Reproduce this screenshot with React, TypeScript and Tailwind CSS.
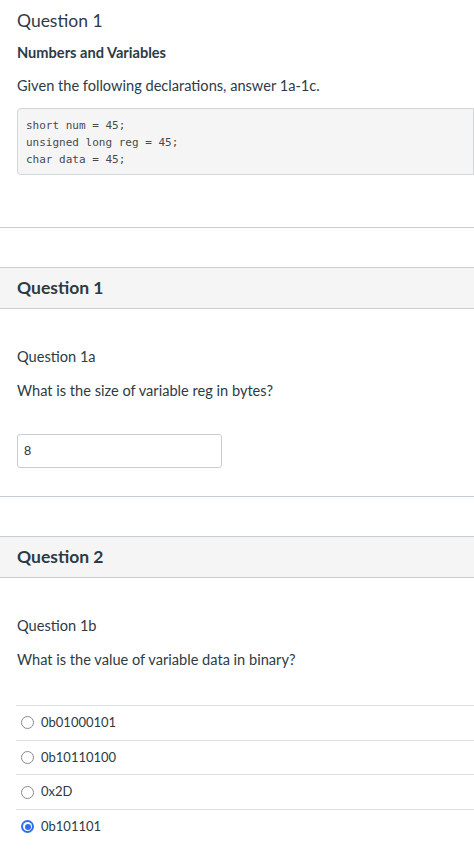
import React from "react";

const lato = { fontFamily: "Lato, 'Noto Sans', sans-serif" };

function Divider() {
  return <div className="h-px w-full bg-[#c7cdd1]" />;
}

function Header({ title }: { title: string }) {
  return (
    <div className="h-[42px] w-full border-y border-[#c7cdd1] bg-[#f5f5f5] flex items-center px-[17px]">
      <span className="text-[17.5px] font-bold text-[#2d3b45] leading-none">{title}</span>
    </div>
  );
}

function Radio({ checked }: { checked?: boolean }) {
  if (checked) {
    return (
      <span className="w-[13px] h-[13px] rounded-full bg-[#2f6fed] flex items-center justify-center shrink-0">
        <span className="w-[9px] h-[9px] rounded-full bg-white flex items-center justify-center">
          <span className="w-[6px] h-[6px] rounded-full bg-[#2f6fed]" />
        </span>
      </span>
    );
  }
  return <span className="w-[13px] h-[13px] rounded-full border border-[#8a8a8a] bg-white shrink-0" />;
}

export default function App() {
  const options = [
    { label: "0b01000101" },
    { label: "0b10110100" },
    { label: "0x2D" },
    { label: "0b101101", checked: true },
  ];
  return (
    <div className="w-[474px] h-[859px] bg-white text-[#2d3b45] overflow-hidden" style={lato}>
      <div className="pl-[17px]">
        <div className="h-[41px] leading-[41px] text-[17.5px]">Question 1</div>
        <div className="h-[24px] leading-[24px] text-[14.6px] font-bold">Numbers and Variables</div>
        <div className="h-[42px] leading-[42px] text-[14.6px]">Given the following declarations, answer 1a-1c.</div>
        <div className="mt-px h-[67px] box-border border border-[#d3d6d9] rounded-l-[4px] bg-[#f5f5f5] pl-[8px] pt-[8px]">
          <pre
            className="m-0 text-[11px] leading-[17px] text-[#444b50]"
            style={{ fontFamily: "'DejaVu Sans Mono', monospace" }}
          >
{`short num = 45;
unsigned long reg = 45;
char data = 45;`}
          </pre>
        </div>
      </div>
      <div className="h-[52px]" />
      <Divider />
      <div className="h-[39px]" />
      <Header title="Question 1" />
      <div className="pl-[17px]">
        <div className="h-[31px]" />
        <div className="h-[34px] leading-[34px] text-[14.6px]">Question 1a</div>
        <div className="h-[34px] leading-[34px] text-[14.6px]">What is the size of variable reg in bytes?</div>
        <div className="h-[26px]" />
        <div
          className="w-[205px] h-[34px] box-border border border-[#c7cdd1] rounded-[3px] flex items-center pl-[6px] text-[13px] text-[#333]"
          style={{ fontFamily: "'Liberation Sans', Arial, sans-serif" }}
        >
          8
        </div>
      </div>
      <div className="h-[28px]" />
      <Divider />
      <div className="h-[39px]" />
      <Header title="Question 2" />
      <div className="pl-[17px]">
        <div className="h-[31px]" />
        <div className="h-[34px] leading-[34px] text-[14.6px]">Question 1b</div>
        <div className="h-[34px] leading-[34px] text-[14.6px]">What is the value of variable data in binary?</div>
        <div className="h-[28px]" />
        <div className="ml-[-1px]">
          {options.map((o) => (
            <div key={o.label} className="h-[34.7px] border-t border-[#dcdfe2] flex items-center gap-[7px] pl-[5px]">
              <Radio checked={o.checked} />
              <span className="text-[13px] text-[#2d3b45]">{o.label}</span>
            </div>
          ))}
        </div>
      </div>
    </div>
  );
}
